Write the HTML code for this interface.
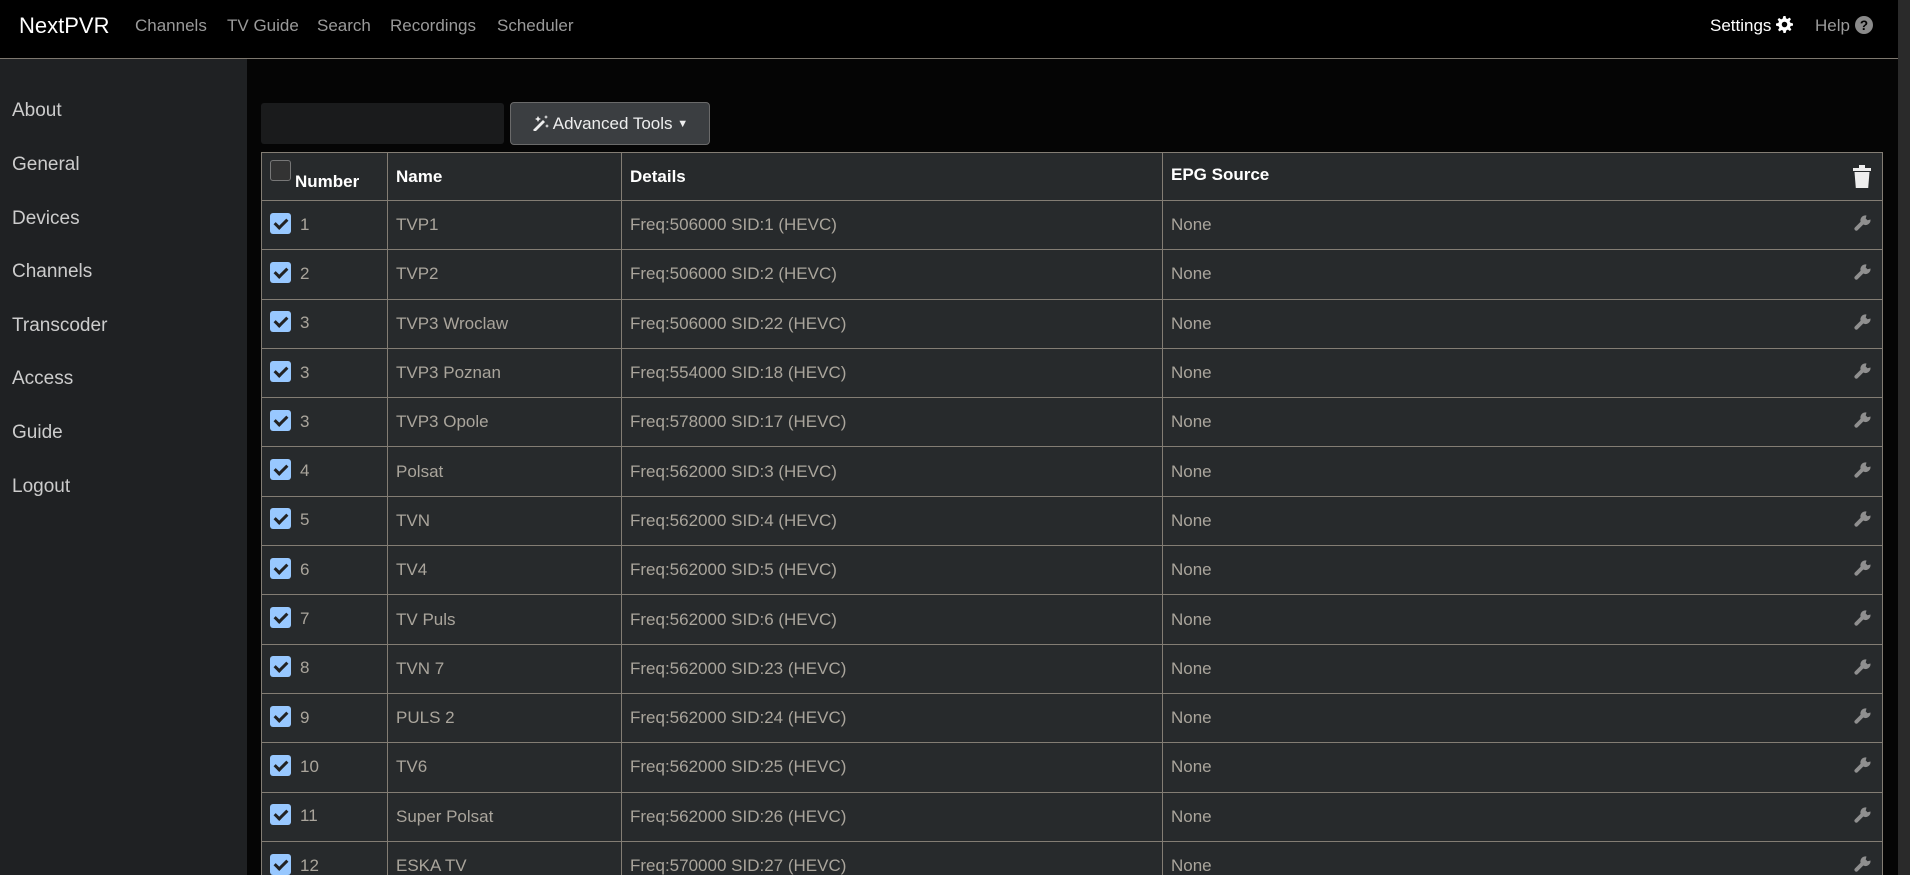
<!DOCTYPE html>
<html style="width:1910px;height:875px;overflow:hidden"><head><meta charset="utf-8"><style>
*{box-sizing:border-box;margin:0;padding:0}
body{width:1910px;height:875px;overflow:hidden;background:#050505;font-family:"Liberation Sans",sans-serif;position:relative}
.nav{position:absolute;left:0;top:0;width:1898px;height:59px;background:#000;border-bottom:1px solid #7d776e}
.nav span{position:absolute;top:16px;font-size:17px;color:#9a9a9a}
.brand{left:19px!important;top:13px!important;font-size:22px!important;color:#fff!important}
.side{position:absolute;left:0;top:59px;width:247px;height:816px;background:#1f2123}
.side div{position:absolute;left:12px;font-size:19px;color:#ccc}
.inp{position:absolute;left:261px;top:103px;width:243px;height:41px;background:#1a1b1c;border-radius:3px}
.btn{position:absolute;left:510px;top:102px;width:200px;height:43px;background:#3b3e41;border:1px solid #6a6a6a;border-radius:4px;color:#eee;font-size:17px;line-height:41px;padding-left:20px}
table{position:absolute;left:261px;top:152px;width:1622px;border-collapse:collapse;background:#272a2c}
td,th{border:1px solid #837d74;font-size:17px;color:#aaa59c;text-align:left;padding:0 8px;height:49.3px}
th{color:#fff;height:48px}
.cb{display:inline-block;width:21px;height:21px;background:#98c8ff;border-radius:3px;vertical-align:middle;margin-right:9px;position:relative;top:-2px}
.cb::after{content:"";position:absolute;left:7px;top:3px;width:5px;height:10px;border:solid #222;border-width:0 3px 3px 0;transform:rotate(45deg)}
.cb0{display:inline-block;width:21px;height:21px;border:1px solid #777;background:#333;border-radius:3px;margin-right:4px;position:relative;top:-6px}
.sb{position:absolute;left:1898px;top:0;width:12px;height:875px;background:#2a2a2a}
</style></head><body>
<div class="nav">
<span class="brand">NextPVR</span>
<span style="left:135px">Channels</span><span style="left:227px">TV Guide</span><span style="left:317px">Search</span><span style="left:390px">Recordings</span><span style="left:497px">Scheduler</span>
<span style="left:1710px;color:#fff">Settings <svg width="17" height="17" viewBox="0 0 16 16" style="vertical-align:-2px"><path fill="#fff" d="M7 0h2l.4 2.2 1.4.6 1.9-1.3 1.4 1.4-1.3 1.9.6 1.4L16 7v2l-2.2.4-.6 1.4 1.3 1.9-1.4 1.4-1.9-1.3-1.4.6L9 16H7l-.4-2.2-1.4-.6-1.9 1.3-1.4-1.4 1.3-1.9-.6-1.4L0 9V7l2.2-.4.6-1.4L1.5 3.3l1.4-1.4 1.9 1.3 1.4-.6z"/><circle cx="8" cy="8" r="2.6" fill="#000"/></svg></span>
<span style="left:1815px">Help <svg width="18" height="18" viewBox="0 0 16 16" style="vertical-align:-3px"><circle cx="8" cy="8" r="8" fill="#8a8a8a"/><text x="8" y="12.5" font-size="12" font-weight="bold" text-anchor="middle" fill="#000" font-family="Liberation Sans">?</text></svg></span>
</div>
<div class="side">
<div style="top:41px">About</div><div style="top:95px">General</div><div style="top:149px">Devices</div><div style="top:202px">Channels</div><div style="top:256px">Transcoder</div><div style="top:309px">Access</div><div style="top:363px">Guide</div><div style="top:417px">Logout</div>
</div>
<div class="inp"></div>
<div class="btn"><svg width="18" height="16" viewBox="0 0 18 16" style="vertical-align:-2px"><path d="M2 15L12 5l2 2L4 17z" fill="#eee"/><path d="M7 1l1 2 2 1-2 1-1 2-1-2-2-1 2-1zM15 0l.6 1.4 1.4.6-1.4.6L15 4l-.6-1.4L13 2l1.4-.6zM16 9l.6 1.4 1.4.6-1.4.6L16 13l-.6-1.4L14 11l1.4-.6z" fill="#eee"/></svg> Advanced Tools <span style="font-size:11px;vertical-align:2px">▼</span></div>
<table>
<tr><th style="width:126px;padding-top:4px"><span class="cb0"></span>Number</th><th style="width:234px">Name</th><th style="width:541px">Details</th><th>EPG Source<svg width="20" height="24" viewBox="0 0 20 24" style="float:right;margin-right:2px"><rect x="1" y="3" width="18" height="3" fill="#eee"/><rect x="7" y="0" width="6" height="3" fill="#eee"/><path d="M2.5 7h15l-1.3 16H3.8z" fill="#eee"/></svg></th></tr>
<tr><td><span class="cb"></span>1</td><td>TVP1</td><td>Freq:506000 SID:1 (HEVC)</td><td>None</td></tr>
<tr><td><span class="cb"></span>2</td><td>TVP2</td><td>Freq:506000 SID:2 (HEVC)</td><td>None</td></tr>
<tr><td><span class="cb"></span>3</td><td>TVP3 Wroclaw</td><td>Freq:506000 SID:22 (HEVC)</td><td>None</td></tr>
<tr><td><span class="cb"></span>3</td><td>TVP3 Poznan</td><td>Freq:554000 SID:18 (HEVC)</td><td>None</td></tr>
<tr><td><span class="cb"></span>3</td><td>TVP3 Opole</td><td>Freq:578000 SID:17 (HEVC)</td><td>None</td></tr>
<tr><td><span class="cb"></span>4</td><td>Polsat</td><td>Freq:562000 SID:3 (HEVC)</td><td>None</td></tr>
<tr><td><span class="cb"></span>5</td><td>TVN</td><td>Freq:562000 SID:4 (HEVC)</td><td>None</td></tr>
<tr><td><span class="cb"></span>6</td><td>TV4</td><td>Freq:562000 SID:5 (HEVC)</td><td>None</td></tr>
<tr><td><span class="cb"></span>7</td><td>TV Puls</td><td>Freq:562000 SID:6 (HEVC)</td><td>None</td></tr>
<tr><td><span class="cb"></span>8</td><td>TVN 7</td><td>Freq:562000 SID:23 (HEVC)</td><td>None</td></tr>
<tr><td><span class="cb"></span>9</td><td>PULS 2</td><td>Freq:562000 SID:24 (HEVC)</td><td>None</td></tr>
<tr><td><span class="cb"></span>10</td><td>TV6</td><td>Freq:562000 SID:25 (HEVC)</td><td>None</td></tr>
<tr><td><span class="cb"></span>11</td><td>Super Polsat</td><td>Freq:562000 SID:26 (HEVC)</td><td>None</td></tr>
<tr><td><span class="cb"></span>12</td><td>ESKA TV</td><td>Freq:570000 SID:27 (HEVC)</td><td>None</td></tr>
</table>
<div class="sb"></div>
<script>
document.querySelectorAll('tr').forEach((r,i)=>{if(i>0){const c=r.lastElementChild;c.innerHTML='None<svg width="18" height="18" viewBox="0 0 18 18" style="float:right;margin-right:2px"><path d="M16.5 4.5l-3 .8-1.8-1.8.8-3A5 5 0 0 0 6.6 6.8L1 12.4a1.9 1.9 0 0 0 2.7 2.7l5.6-5.6a5 5 0 0 0 7.2-5z" fill="#8f8f8f"/></svg>';}});
</script>
</body></html>
